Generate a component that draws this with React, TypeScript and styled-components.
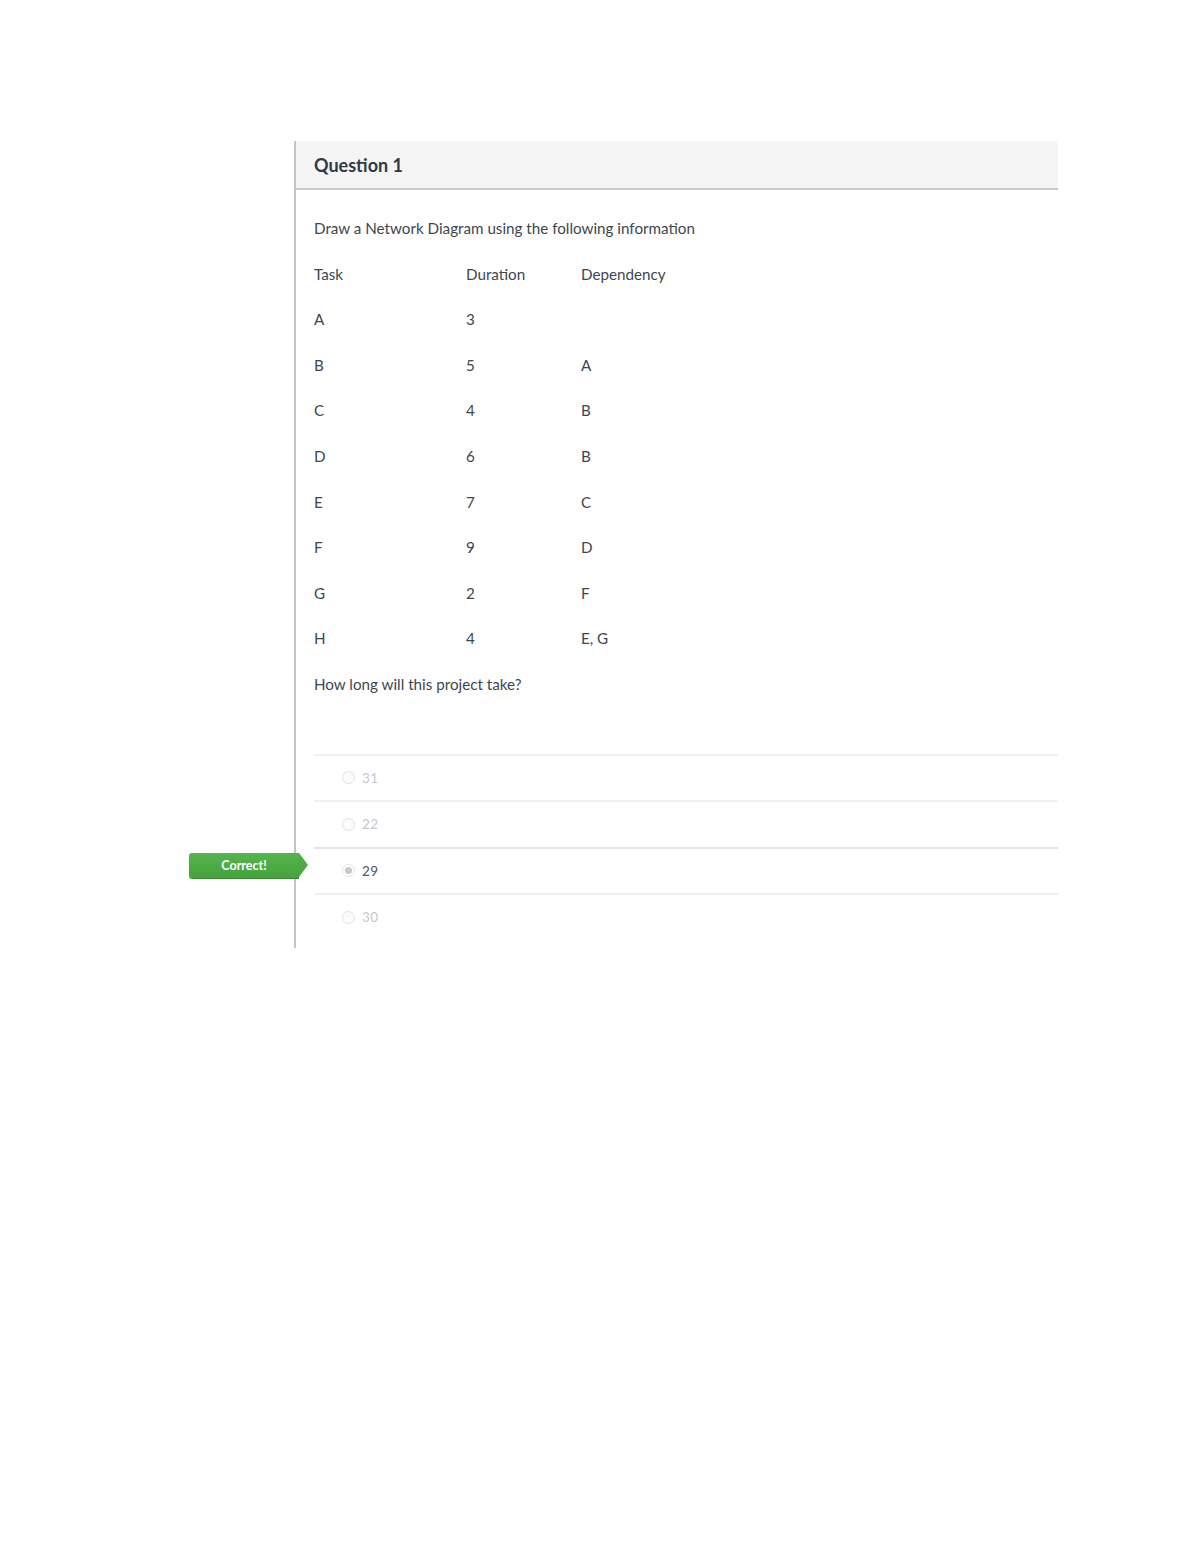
import React from 'react';
import styled, {createGlobalStyle} from 'styled-components';

const GlobalStyle = createGlobalStyle`
  html, body {
    margin: 0;
    padding: 0;
    background: #ffffff;
  }
  body {
    font-family: Lato, 'Liberation Sans', sans-serif;
    color: #2d3b45;
  }
`;

const Page = styled.div`
  width: 1200px;
  min-height: 1553px;
  padding: 141px 0 0 294px;
  box-sizing: border-box;
`;

const Panel = styled.div`
  width: 764px;
  border-left: 2px solid #c4c4c4;
  box-sizing: border-box;
  padding-bottom: 8px;
`;

const Header = styled.div`
  height: 47px;
  display: flex;
  align-items: center;
  padding-left: 18px;
  background: #f5f5f5;
  border-bottom: 2px solid #c9c9c9;
  font-size: 18px;
  font-weight: 700;
  color: #2d3b45;
`;

const Body = styled.div`
  padding: 16px 0 0 18px;
`;

const Line = styled.div`
  line-height: 45.6px;
  font-size: 15.2px;
  color: #3b4750;
`;

const Table = styled.div`
  display: grid;
  grid-template-columns: 152px 115px 1fr;
`;

const Cell = styled.div`
  line-height: 45.6px;
  height: 45.6px;
  font-size: 15.2px;
  color: #3b4750;
`;

const Answers = styled.div`
  margin-top: 46px;
`;

const AnswerRow = styled.div<{$strong?: boolean}>`
  position: relative;
  height: 46.5px;
  display: flex;
  align-items: center;
  gap: 7px;
  padding-left: 28px;
  border-top: 2px solid ${(p) => (p.$strong ? '#e4e4e4' : '#f0f0f0')};
  box-sizing: border-box;
`;

const Radio = styled.span<{$checked?: boolean}>`
  width: 11px;
  height: 11px;
  border-radius: 50%;
  border: 1px solid #e3e3e3;
  background: ${(p) => (p.$checked ? '#fff' : '#fbfbfb')};
  display: flex;
  align-items: center;
  justify-content: center;
  &::after {
    content: '';
    display: ${(p) => (p.$checked ? 'block' : 'none')};
    width: 7px;
    height: 7px;
    border-radius: 50%;
    background: #c9c9c9;
  }
`;

const AnswerText = styled.span<{$selected?: boolean}>`
  font-size: 13.5px;
  color: ${(p) => (p.$selected ? '#4a5560' : '#c4c8cc')};
  letter-spacing: 0.5px;
`;

const Badge = styled.div`
  position: absolute;
  left: -125px;
  top: 4px;
  width: 110px;
  height: 25px;
  background: linear-gradient(#55b44c, #45a33d);
  border-radius: 3px 0 0 3px;
  color: #fff;
  font-size: 12.5px;
  font-weight: 700;
  display: flex;
  align-items: center;
  justify-content: center;
  box-shadow: 0 1px 0 #3a8a33;
  &::after {
    content: '';
    position: absolute;
    right: -9px;
    top: 0;
    border-top: 12.5px solid transparent;
    border-bottom: 12.5px solid transparent;
    border-left: 9px solid #4dab45;
  }
`;

const rows = [
  ['A', '3', ''],
  ['B', '5', 'A'],
  ['C', '4', 'B'],
  ['D', '6', 'B'],
  ['E', '7', 'C'],
  ['F', '9', 'D'],
  ['G', '2', 'F'],
  ['H', '4', 'E, G'],
];

const answers = [
  {label: '31'},
  {label: '22'},
  {label: '29', selected: true},
  {label: '30'},
];

const App = () => {
  return (
    <Page>
      <GlobalStyle />
      <Panel>
        <Header>Question 1</Header>
        <Body>
          <Line>Draw a Network Diagram using the following information</Line>
          <Table>
            <Cell>Task</Cell>
            <Cell>Duration</Cell>
            <Cell>Dependency</Cell>
            {rows.map((r) => (
              <React.Fragment key={r[0]}>
                <Cell>{r[0]}</Cell>
                <Cell>{r[1]}</Cell>
                <Cell>{r[2]}</Cell>
              </React.Fragment>
            ))}
          </Table>
          <Line>How long will this project take?</Line>
          <Answers>
            {answers.map((a) => (
              <AnswerRow key={a.label} $strong={a.selected}>
                {a.selected ? <Badge>Correct!</Badge> : null}
                <Radio $checked={a.selected} />
                <AnswerText $selected={a.selected}>{a.label}</AnswerText>
              </AnswerRow>
            ))}
          </Answers>
        </Body>
      </Panel>
    </Page>
  );
};

export default App;
